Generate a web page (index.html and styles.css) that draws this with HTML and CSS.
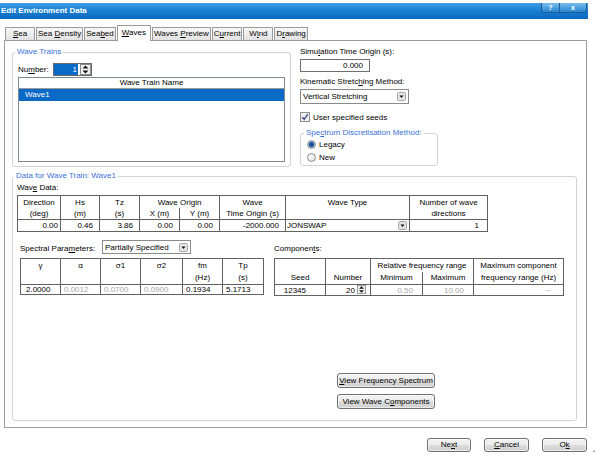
FILE: index.html
```html
<!DOCTYPE html>
<html lang="en">
<head>
    <meta charset="UTF-8">
    <title>Edit Environment Data</title>
    <link rel="stylesheet" href="styles.css">
</head>
<body>

<div class="window">
    <!-- 标题栏 -->
    <div class="titlebar">
        <span class="title">Edit Environment Data</span>
        <div class="caption-buttons">
            <span class="caption-btn help">?</span>
            <span class="caption-btn close">x</span>
        </div>
    </div>

    <!-- 选项卡 -->
    <div class="tabs">
        <span class="tab"><u>S</u>ea</span>
        <span class="tab">Sea <u>D</u>ensity</span>
        <span class="tab">Sea<u>b</u>ed</span>
        <span class="tab active"><u>W</u>aves</span>
        <span class="tab">Waves <u>P</u>review</span>
        <span class="tab">C<u>u</u>rrent</span>
        <span class="tab">W<u>i</u>nd</span>
        <span class="tab">D<u>r</u>awing</span>
    </div>

    <div class="panel">
        <div class="top-row">
            <fieldset class="group wave-trains">
                <legend>Wave Trains</legend>
                <div class="number-row">
                    <label class="number-label">Nu<u>m</u>ber:</label>
                    <div class="spin">
                        <span class="spin-value">1</span>
                        <svg class="spin-arrows" width="11" height="11" viewBox="0 0 11 11"><rect x="0.5" y="0.5" width="10" height="10" fill="#f2f2f2" stroke="#8a8a8a"/><path d="M5.5 1.5 8.5 4.5h-6z M5.5 9.5 8.5 6.5h-6z" fill="#111"/></svg>
                    </div>
                </div>
                <div class="listbox">
                    <div class="list-header">Wave Train Name</div>
                    <div class="list-row selected">Wave1</div>
                </div>
            </fieldset>

            <div class="right-col">
                <label class="field-label">Simu<u>l</u>ation Time Origin (s):</label>
                <div class="textbox">0.000</div>
                <label class="field-label kinematic">Kinematic Stretc<u>h</u>ing Method:</label>
                <div class="combo stretching">
                    <span>Vertical Stretching</span>
                    <svg width="9" height="9" viewBox="0 0 9 9"><rect x="0.5" y="0.5" width="8" height="8" rx="1" fill="#e4e4e4" stroke="#a8a8a8"/><path d="M2.5 3.5h4l-2 2.5z" fill="#111"/></svg>
                </div>
                <div class="check-row">
                    <svg width="10" height="10" viewBox="0 0 10 10"><rect x="0.5" y="0.5" width="9" height="9" fill="#f0f0f0" stroke="#8f8f8f"/><path d="M2.3 5.2 4.2 7.3 7.8 2.2" fill="none" stroke="#3b4f86" stroke-width="1.4"/></svg>
                    <span>User specified seeds</span>
                </div>
                <fieldset class="group spectrum">
                    <legend>Spe<u>c</u>trum Discretisation Method:</legend>
                    <div class="radio-row legacy"><span class="radio on"></span>Legacy</div>
                    <div class="radio-row"><span class="radio"></span>New</div>
                </fieldset>
            </div>
        </div>

        <fieldset class="group data-group">
            <legend>Data for Wave Train: Wave1</legend>
            <div class="field-label wave-data-label">Wav<u>e</u> Data:</div>
            <table class="grid wave-grid">
                <colgroup>
                    <col class="w43"><col class="w39"><col class="w40"><col class="w40"><col class="w40"><col class="w66"><col class="w124"><col class="w78">
                </colgroup>
                <tr>
                    <th rowspan="2">Direction<br>(deg)</th>
                    <th rowspan="2">Hs<br>(m)</th>
                    <th rowspan="2">Tz<br>(s)</th>
                    <th colspan="2" class="open-bottom">Wave Origin</th>
                    <th rowspan="2">Wave<br>Time Origin (s)</th>
                    <th rowspan="2">Wave Type</th>
                    <th rowspan="2">Number of wave<br>directions</th>
                </tr>
                <tr>
                    <th class="open-top">X (m)</th>
                    <th class="open-top">Y (m)</th>
                </tr>
                <tr>
                    <td class="first">0.00</td>
                    <td>0.46</td>
                    <td>3.86</td>
                    <td>0.00</td>
                    <td>0.00</td>
                    <td>-2000.000</td>
                    <td class="type-cell">
                        <div class="type-inner">
                            <span>JONSWAP</span>
                            <svg width="9" height="9" viewBox="0 0 9 9"><rect x="0.5" y="0.5" width="8" height="8" rx="1" fill="#e4e4e4" stroke="#a8a8a8"/><path d="M2.5 3.5h4l-2 2.5z" fill="#111"/></svg>
                        </div>
                    </td>
                    <td class="dirs">1</td>
                </tr>
            </table>

            <div class="param-row">
                <div class="spectral">
                    <div class="section-head">
                        <span class="field-label spectral-label">Spectral Para<u>m</u>eters:</span>
                        <div class="combo partial">
                            <span>Partially Specified</span>
                            <svg width="9" height="9" viewBox="0 0 9 9"><rect x="0.5" y="0.5" width="8" height="8" rx="1" fill="#e4e4e4" stroke="#a8a8a8"/><path d="M2.5 3.5h4l-2 2.5z" fill="#111"/></svg>
                        </div>
                    </div>
                    <table class="grid small-grid spectral-grid">
                        <colgroup>
                            <col class="w40"><col class="w40"><col class="w40"><col class="w42"><col class="w40"><col class="w41">
                        </colgroup>
                        <tr>
                            <th>γ</th>
                            <th>α</th>
                            <th>σ1</th>
                            <th>σ2</th>
                            <th>fm<br>(Hz)</th>
                            <th>Tp<br>(s)</th>
                        </tr>
                        <tr>
                            <td class="first">2.0000</td>
                            <td class="muted">0.0012</td>
                            <td class="muted">0.0700</td>
                            <td class="muted">0.0900</td>
                            <td>0.1934</td>
                            <td>5.1713</td>
                        </tr>
                    </table>
                </div>

                <div class="components">
                    <div class="section-head">
                        <span class="field-label">Componen<u>t</u>s:</span>
                    </div>
                    <table class="grid small-grid comp-grid">
                        <colgroup>
                            <col class="w51"><col class="w45"><col class="w52"><col class="w51"><col class="w90">
                        </colgroup>
                        <tr>
                            <th rowspan="2" class="bottom">Seed</th>
                            <th rowspan="2" class="bottom">Number</th>
                            <th colspan="2" class="open-bottom">Relative frequency range</th>
                            <th rowspan="2">Maximum component<br>frequency range (Hz)</th>
                        </tr>
                        <tr>
                            <th class="open-top">Minimum</th>
                            <th class="open-top">Maximum</th>
                        </tr>
                        <tr>
                            <td class="seed">12345</td>
                            <td class="count">20<svg width="9" height="9" viewBox="0 0 11 11"><rect x="0.5" y="0.5" width="10" height="10" fill="#f2f2f2" stroke="#8a8a8a"/><path d="M5.5 1.5 8.5 4.5h-6z M5.5 9.5 8.5 6.5h-6z" fill="#111"/></svg></td>
                            <td class="muted">0.50</td>
                            <td class="muted">10.00</td>
                            <td class="muted tilde">~</td>
                        </tr>
                    </table>
                </div>
            </div>

            <div class="view-buttons">
                <button class="btn view-btn"><u>V</u>iew Frequency Spectrum</button>
                <button class="btn view-btn">View Wave C<u>o</u>mponents</button>
            </div>
        </fieldset>
    </div>

    <!-- 底部按钮 -->
    <div class="footer">
        <button class="btn next">Ne<u>x</u>t</button>
        <button class="btn cancel"><u>C</u>ancel</button>
        <button class="btn ok">O<u>k</u></button>
    </div>

    <svg class="grip" width="7" height="7" viewBox="0 0 7 7"><path d="M6 0.5V6H0.5" fill="none" stroke="#444"/></svg>
</div>

</body>
</html>
```

FILE: styles.css
```css
* {
    box-sizing: border-box;
}

body {
    margin: 0;
    background-color: #fff;
    font-family: "Liberation Sans", Arial, sans-serif;
    font-size: 8px;
    color: #000;
}

u {
    text-decoration: underline;
}

.window {
    position: relative;
    width: 588px;
    padding-top: 3px;
}

/* title bar */
.titlebar {
    display: flex;
    justify-content: space-between;
    align-items: flex-start;
    height: 16px;
    padding: 0 1px;
    background: linear-gradient(to bottom, #3d9fe2 0%, #1a80d1 45%, #0b69bf 100%);
}

.title {
    align-self: center;
    color: #fff;
    font-weight: bold;
    line-height: 16px;
}

.caption-buttons {
    display: flex;
}

.caption-btn {
    height: 10px;
    border: 1px solid #1f5b96;
    border-top: none;
    background: linear-gradient(to bottom, rgba(255, 255, 255, 0.3), rgba(255, 255, 255, 0.08));
    color: #fff;
    font-weight: bold;
    font-size: 7px;
    line-height: 9px;
    text-align: center;
}

.caption-btn.help {
    width: 19px;
    border-radius: 0 0 0 3px;
}

.caption-btn.close {
    width: 27px;
    border-left: none;
    border-radius: 0 0 3px 0;
}

/* tabs */
.tabs {
    display: flex;
    align-items: flex-end;
    margin: 6px 0 0 5px;
}

.tab {
    height: 13px;
    min-width: 30px;
    padding: 0 1px;
    margin-right: 1px;
    border: 1px solid #9b9b9b;
    border-bottom: none;
    background: linear-gradient(to bottom, #f8f8f8, #e2e2e2);
    line-height: 12px;
    text-align: center;
    white-space: nowrap;
}

.tab.active {
    position: relative;
    z-index: 1;
    height: 16px;
    padding: 0 4px 3px;
    margin-bottom: -1px;
    background: #fff;
    line-height: 13px;
}

/* tab page */
.panel {
    width: 583px;
    margin-left: 4px;
    padding: 6px 0 6px 7px;
    border: 1px solid #9b9b9b;
    background-color: #fff;
}

.top-row {
    display: flex;
    align-items: flex-start;
}

.group {
    margin: 0;
    min-width: 0;
    border: 1px solid #d3d3d3;
    border-radius: 3px;
}

.group legend {
    padding: 0 2px;
    margin-left: -3px;
    color: #3a6fd8;
    line-height: 10px;
}

.wave-trains {
    width: 279px;
    padding: 0 5px 4px;
}

.number-row {
    display: flex;
    align-items: center;
    margin-top: 6px;
}

.number-label {
    width: 35px;
    line-height: 10px;
}

.spin {
    display: flex;
    align-items: center;
    width: 39px;
    height: 13px;
    border: 1px solid #6a6a6a;
}

.spin-value {
    width: 24px;
    height: 11px;
    padding-right: 1px;
    background-color: #0b6ac6;
    color: #fff;
    line-height: 11px;
    text-align: right;
}

.spin-arrows {
    margin-left: 2px;
}

.listbox {
    height: 85px;
    margin-top: 1px;
    border: 1px solid #828790;
}

.list-header {
    height: 11px;
    border-bottom: 1px solid #9a9a9a;
    line-height: 10px;
    text-align: center;
}

.list-row {
    height: 12px;
    padding-left: 6px;
    line-height: 12px;
}

.list-row.selected {
    background-color: #0b6ac6;
    color: #fff;
}

/* right column */
.right-col {
    display: flex;
    flex-direction: column;
    align-items: flex-start;
    margin-left: 9px;
}

.field-label {
    display: block;
    line-height: 10px;
    white-space: nowrap;
}

.textbox {
    width: 70px;
    height: 13px;
    margin-top: 2px;
    padding-right: 6px;
    border: 1px solid #6f6f6f;
    line-height: 11px;
    text-align: right;
}

.kinematic {
    margin-top: 5px;
}

.combo {
    display: flex;
    align-items: center;
    justify-content: space-between;
    height: 15px;
    padding: 0 2px 0 2px;
    border: 1px solid #8a8a8a;
    background-color: #fff;
    white-space: nowrap;
}

.combo.stretching {
    width: 109px;
    margin-top: 2px;
}

.check-row {
    display: flex;
    align-items: center;
    gap: 3px;
    height: 10px;
    margin-top: 8px;
}

.spectrum {
    width: 138px;
    margin-top: 6px;
    padding: 0 5px 3px 6px;
}

.radio-row {
    display: flex;
    align-items: center;
    gap: 3px;
    height: 10px;
    margin-top: 3px;
}

.radio-row.legacy {
    margin-top: 1px;
}

.radio {
    width: 9px;
    height: 9px;
    border: 1px solid #8f8f8f;
    border-radius: 50%;
    background: radial-gradient(circle at 40% 35%, #fff, #d6d6d6);
}

.radio.on {
    background: radial-gradient(circle, #1d4c92 0, #1d4c92 2px, #6e9fd6 2.8px, #e9e9e9 3.6px);
}

/* data for wave train */
.data-group {
    width: 565px;
    margin-top: 4px;
    padding: 0 4px 11px;
}

.wave-data-label {
    margin-top: 2px;
}

.grid {
    border-collapse: collapse;
    table-layout: fixed;
    margin-top: 2px;
}

.grid th,
.grid td {
    border: 1px solid #626262;
    padding: 0;
    white-space: nowrap;
    overflow: hidden;
}

.grid th {
    font-weight: normal;
    text-align: center;
    vertical-align: top;
    line-height: 11px;
    padding-top: 1px;
}

.grid th.open-bottom {
    border-bottom-style: hidden;
}

.grid th.open-top {
    border-top-style: hidden;
    padding-top: 0;
}

.grid th.bottom {
    vertical-align: bottom;
}

.grid td {
    height: 12px;
    padding: 0 6px 0 0;
    line-height: 11px;
    text-align: right;
}

.grid td.first {
    padding-right: 2px;
}

.grid td.dirs {
    padding-right: 8px;
}

.grid td.type-cell {
    padding: 0 2px 0 1px;
    text-align: left;
}

.type-inner {
    display: flex;
    align-items: center;
    justify-content: space-between;
}

.w39 { width: 39px; }
.w40 { width: 40px; }
.w41 { width: 41px; }
.w42 { width: 42px; }
.w43 { width: 43px; }
.w45 { width: 45px; }
.w51 { width: 51px; }
.w52 { width: 52px; }
.w66 { width: 66px; }
.w78 { width: 78px; }
.w90 { width: 90px; }
.w124 { width: 124px; }

.param-row {
    display: flex;
    align-items: flex-start;
    margin-top: 8px;
}

.spectral {
    margin-left: 3px;
}

.components {
    margin-left: 10px;
}

.section-head {
    display: flex;
    align-items: flex-end;
    height: 14px;
}

.spectral-label {
    width: 82px;
}

.combo.partial {
    width: 89px;
    height: 14px;
}

.small-grid {
    margin-top: 4px;
}

.small-grid th {
    line-height: 12px;
}

.small-grid td {
    height: 10px;
    line-height: 9px;
}

.spectral-grid td {
    padding: 0 0 0 3px;
    text-align: left;
}

.spectral-grid td.first {
    padding-left: 5px;
}

.muted {
    color: #a8a8a8;
}

.comp-grid td {
    padding-right: 9px;
}

.comp-grid td.seed {
    padding-right: 19px;
}

.comp-grid td.count {
    padding-right: 4px;
}

.comp-grid td.count svg {
    margin-left: 2px;
    vertical-align: -1px;
}

.comp-grid td.tilde {
    padding-right: 12px;
}

/* buttons */
.btn {
    height: 15px;
    padding: 0;
    border: 1px solid #707070;
    border-radius: 3px;
    background: linear-gradient(to bottom, #f3f3f3 0%, #ebebeb 50%, #dddddd 50%, #cfcfcf 100%);
    box-shadow: inset 0 0 0 1px rgba(255, 255, 255, 0.6);
    font-family: inherit;
    font-size: 8px;
    line-height: 12px;
    color: #000;
    text-align: center;
}

.view-buttons {
    display: flex;
    flex-direction: column;
    gap: 6px;
    margin-top: 77px;
    padding-left: 320px;
}

.view-btn {
    width: 98px;
}

.footer {
    display: flex;
    justify-content: flex-end;
    gap: 13px;
    margin-top: 10px;
    padding-right: 1px;
}

.footer .btn {
    height: 14px;
    width: 45px;
}

.footer .btn.next {
    width: 44px;
}

.grip {
    position: absolute;
    right: -7px;
    bottom: -5px;
}
```
